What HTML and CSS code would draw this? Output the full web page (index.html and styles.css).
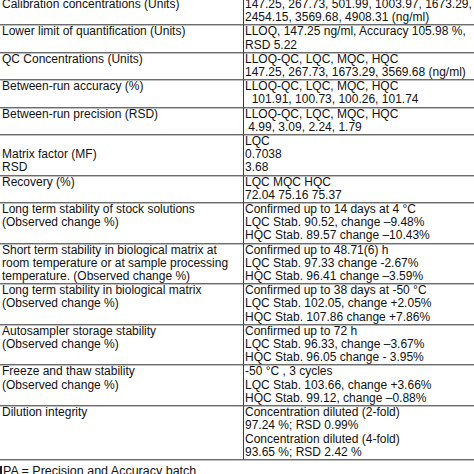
FILE: index.html
```html
<!DOCTYPE html>
<html>
<head>
<meta charset="utf-8">
<link rel="stylesheet" href="styles.css">
</head>
<body>
<div class="sheet">
<table class="params">
<tbody>
<tr><td class="label">Calibration concentrations (Units)</td><td class="value">147.25, 267.73, 501.99, 1003.97, 1673.29,<br>2454.15, 3569.68, 4908.31 (ng/ml)</td></tr>
<tr><td class="label">Lower limit of quantification (Units)</td><td class="value">LLOQ, 147.25 ng/ml, Accuracy 105.98 %,<br>RSD 5.22</td></tr>
<tr><td class="label">QC Concentrations (Units)</td><td class="value">LLOQ-QC, LQC, MQC, HQC<br>147.25, 267.73, 1673.29, 3569.68 (ng/ml)</td></tr>
<tr><td class="label">Between-run accuracy (%)</td><td class="value">LLOQ-QC, LQC, MQC, HQC<br>&nbsp;&nbsp;101.91, 100.73, 100.26, 101.74</td></tr>
<tr><td class="label">Between-run precision (RSD)</td><td class="value">LLOQ-QC, LQC, MQC, HQC<br>&nbsp;4.99, 3.09, 2.24, 1.79</td></tr>
<tr><td class="label"><br>Matrix factor (MF)<br>RSD</td><td class="value">LQC<br>0.7038<br>3.68</td></tr>
<tr><td class="label">Recovery (%)</td><td class="value">LQC MQC HQC<br>72.04 75.16 75.37</td></tr>
<tr><td class="label">Long term stability of stock solutions<br>(Observed change %)</td><td class="value">Confirmed up to 14 days at 4 °C<br>LQC Stab. 90.52, change –9.48%<br>HQC Stab. 89.57 change –10.43%</td></tr>
<tr><td class="label">Short term stability in biological matrix at<br>room temperature or at sample processing<br>temperature. (Observed change %)</td><td class="value">Confirmed up to 48.71(6) h<br>LQC Stab. 97.33 change -2.67%<br>HQC Stab. 96.41 change –3.59%</td></tr>
<tr><td class="label">Long term stability in biological matrix<br>(Observed change %)</td><td class="value">Confirmed up to 38 days at -50 °C<br>LQC Stab. 102.05, change +2.05%<br>HQC Stab. 107.86 change +7.86%</td></tr>
<tr><td class="label">Autosampler storage stability<br>(Observed change %)</td><td class="value">Confirmed up to 72 h<br>LQC Stab. 96.33, change –3.67%<br>HQC Stab. 96.05 change - 3.95%</td></tr>
<tr><td class="label">Freeze and thaw stability<br>(Observed change %)</td><td class="value">-50 °C , 3 cycles<br>LQC Stab. 103.66, change +3.66%<br>HQC Stab. 99.12, change –0.88%</td></tr>
<tr><td class="label">Dilution integrity</td><td class="value">Concentration diluted (2-fold)<br>97.24 %; RSD 0.99%<br>Concentration diluted (4-fold)<br>93.65 %; RSD 2.42 %</td></tr>
</tbody>
</table>
<p class="note"><span class="cut"></span>PA = Precision and Accuracy batch</p>
</div>
</body>
</html>
```

FILE: styles.css
```css
html, body {
  margin: 0;
  padding: 0;
  overflow: hidden;
  background: #ffffff;
}

body {
  font-family: "Liberation Sans", Arial, sans-serif;
  font-size: 12px;
  color: #111111;
}

.sheet {
  margin-top: -2px;
}

.params {
  border-collapse: separate;
  border-spacing: 0;
  table-layout: fixed;
  width: 500px;
}

.params td {
  box-sizing: border-box;
  padding: 0;
  vertical-align: top;
  line-height: 13.2px;
  white-space: nowrap;
  border-bottom: 1px solid #6c6c6c;
  box-shadow: 0 1px 0 #bfbfbf;
}

.params td.label {
  width: 243px;
  padding-left: 2px;
}

.params td.value {
  border-left: 1px solid #3a3a3a;
  padding-left: 1px;
}

.note {
  margin: 5px 0 0 0;
  font-size: 12.5px;
  line-height: 13px;
  white-space: nowrap;
}

.cut {
  display: inline-block;
  width: 2px;
  height: 9px;
  margin-right: 1px;
  background: #222222;
  vertical-align: baseline;
}
```
